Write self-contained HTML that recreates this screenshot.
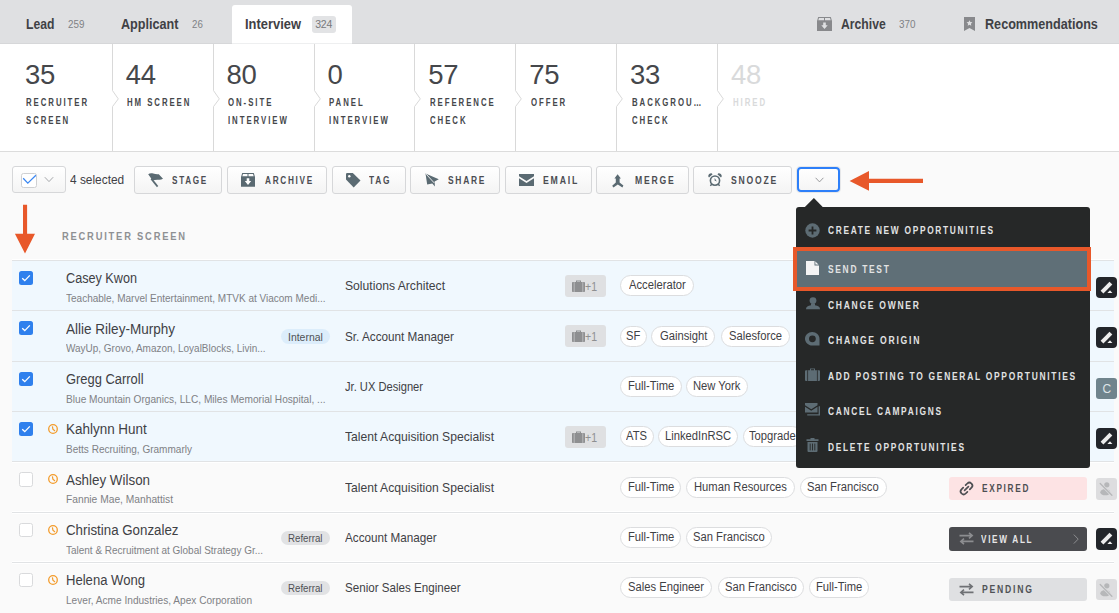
<!DOCTYPE html><html><head><meta charset="utf-8"><style>
*{margin:0;padding:0;box-sizing:border-box}
html,body{width:1119px;height:613px;overflow:hidden;background:#fafafa;font-family:"Liberation Sans",sans-serif}
.t{position:absolute;white-space:nowrap;transform-origin:0 0}
.r{position:absolute}
svg{position:absolute;overflow:visible}
</style></head><body>
<div class="r" style="left:0px;top:0px;width:1119px;height:44px;background:#dfe0e2;border-bottom:1px solid #d6d7d9"></div>
<div class="r" style="left:232px;top:5px;width:120px;height:38.5px;background:#fff;border-radius:3px 3px 0 0"></div>
<div class="t" style="left:26.2px;top:17.45px;font-size:14.5px;line-height:14.5px;color:#3f4145;font-weight:700;letter-spacing:0px;transform:scaleX(0.84);">Lead</div>
<div class="t" style="left:67.6px;top:19.95px;font-size:10.3px;line-height:10.3px;color:#808285;font-weight:400;letter-spacing:0px;transform:scaleX(0.9544);">259</div>
<div class="t" style="left:121.3px;top:17.45px;font-size:14.5px;line-height:14.5px;color:#3f4145;font-weight:700;letter-spacing:0px;transform:scaleX(0.87);">Applicant</div>
<div class="t" style="left:192.3px;top:19.95px;font-size:10.3px;line-height:10.3px;color:#808285;font-weight:400;letter-spacing:0px;transform:scaleX(0.9428);">26</div>
<div class="t" style="left:245.2px;top:17.25px;font-size:14.5px;line-height:14.5px;color:#3f4145;font-weight:700;letter-spacing:0px;transform:scaleX(0.89);">Interview</div>
<div class="r" style="left:232px;top:43px;width:120px;height:1px;background:#eeeff0"></div>
<div class="r" style="left:312px;top:16px;width:24px;height:17px;background:#e2e3e5;border-radius:3px"></div>
<div class="t" style="left:315.2px;top:19.35px;font-size:10.5px;line-height:10.5px;color:#77797c;font-weight:400;letter-spacing:-0.2px;">324</div>
<svg style="left:817px;top:17px" width="15" height="14" viewBox="0 0 15 14"><path d="M1.2 0H13.8L15 3.9V14H0V3.9z" fill="#88898c"/><path d="M2 1H7V3.2H1.3zM8 1H13L13.7 3.2H8z" fill="#dfe0e2"/><path d="M6.2 5.4H8.8V8.2H10.7L7.5 12 4.3 8.2H6.2z" fill="#dfe0e2"/></svg>
<div class="t" style="left:840.5px;top:17.05px;font-size:14.5px;line-height:14.5px;color:#3f4145;font-weight:700;letter-spacing:0px;transform:scaleX(0.84);">Archive</div>
<div class="t" style="left:898.8px;top:19.95px;font-size:10.3px;line-height:10.3px;color:#808285;font-weight:400;letter-spacing:0px;transform:scaleX(0.9602);">370</div>
<svg style="left:964px;top:17px" width="11" height="14" viewBox="0 0 11 14"><path d="M0 0h11v14L5.5 11 0 14z" fill="#88898c"/><path d="M5.5 3.2l.9 1.9 2 .2-1.5 1.4.4 2-1.8-1-1.8 1 .4-2L2.6 5.3l2-.2z" fill="#dfe0e2"/></svg>
<div class="t" style="left:985px;top:17.25px;font-size:14.5px;line-height:14.5px;color:#3f4145;font-weight:700;letter-spacing:0px;transform:scaleX(0.87);">Recommendations</div>
<div class="r" style="left:0px;top:44px;width:1119px;height:108px;background:#fff;border-bottom:1px solid #dcdcdc"></div>
<div class="t" style="left:24.9px;top:61.45px;font-size:27.5px;line-height:27.5px;color:#45474b;font-weight:400;letter-spacing:-0.3px;">35</div>
<div class="t" style="left:25.5px;top:98.10px;font-size:10px;line-height:10px;color:#45474b;font-weight:700;letter-spacing:2.5px;transform:scaleX(0.78);">RECRUITER</div>
<div class="t" style="left:25.5px;top:115.90px;font-size:10px;line-height:10px;color:#45474b;font-weight:700;letter-spacing:2.5px;transform:scaleX(0.78);">SCREEN</div>
<div class="t" style="left:125.75999999999999px;top:61.45px;font-size:27.5px;line-height:27.5px;color:#45474b;font-weight:400;letter-spacing:-0.3px;">44</div>
<div class="t" style="left:127.35999999999999px;top:98.10px;font-size:10px;line-height:10px;color:#45474b;font-weight:700;letter-spacing:2.5px;transform:scaleX(0.78);">HM SCREEN</div>
<div class="t" style="left:226.62px;top:61.45px;font-size:27.5px;line-height:27.5px;color:#45474b;font-weight:400;letter-spacing:-0.3px;">80</div>
<div class="t" style="left:228.22px;top:98.10px;font-size:10px;line-height:10px;color:#45474b;font-weight:700;letter-spacing:2.5px;transform:scaleX(0.78);">ON-SITE</div>
<div class="t" style="left:228.22px;top:115.90px;font-size:10px;line-height:10px;color:#45474b;font-weight:700;letter-spacing:2.5px;transform:scaleX(0.78);">INTERVIEW</div>
<div class="t" style="left:327.47999999999996px;top:61.45px;font-size:27.5px;line-height:27.5px;color:#45474b;font-weight:400;letter-spacing:-0.3px;">0</div>
<div class="t" style="left:329.08px;top:98.10px;font-size:10px;line-height:10px;color:#45474b;font-weight:700;letter-spacing:2.5px;transform:scaleX(0.78);">PANEL</div>
<div class="t" style="left:329.08px;top:115.90px;font-size:10px;line-height:10px;color:#45474b;font-weight:700;letter-spacing:2.5px;transform:scaleX(0.78);">INTERVIEW</div>
<div class="t" style="left:428.34px;top:61.45px;font-size:27.5px;line-height:27.5px;color:#45474b;font-weight:400;letter-spacing:-0.3px;">57</div>
<div class="t" style="left:429.94px;top:98.10px;font-size:10px;line-height:10px;color:#45474b;font-weight:700;letter-spacing:2.5px;transform:scaleX(0.78);">REFERENCE</div>
<div class="t" style="left:429.94px;top:115.90px;font-size:10px;line-height:10px;color:#45474b;font-weight:700;letter-spacing:2.5px;transform:scaleX(0.78);">CHECK</div>
<div class="t" style="left:529.2px;top:61.45px;font-size:27.5px;line-height:27.5px;color:#45474b;font-weight:400;letter-spacing:-0.3px;">75</div>
<div class="t" style="left:530.8000000000001px;top:98.10px;font-size:10px;line-height:10px;color:#45474b;font-weight:700;letter-spacing:2.5px;transform:scaleX(0.78);">OFFER</div>
<div class="t" style="left:630.06px;top:61.45px;font-size:27.5px;line-height:27.5px;color:#45474b;font-weight:400;letter-spacing:-0.3px;">33</div>
<div class="t" style="left:631.66px;top:98.10px;font-size:10px;line-height:10px;color:#45474b;font-weight:700;letter-spacing:2.5px;transform:scaleX(0.78);">BACKGROU…</div>
<div class="t" style="left:631.66px;top:115.90px;font-size:10px;line-height:10px;color:#45474b;font-weight:700;letter-spacing:2.5px;transform:scaleX(0.78);">CHECK</div>
<div class="t" style="left:730.92px;top:61.45px;font-size:27.5px;line-height:27.5px;color:#d9dadb;font-weight:400;letter-spacing:-0.3px;">48</div>
<div class="t" style="left:732.52px;top:98.10px;font-size:10px;line-height:10px;color:#d9dadb;font-weight:700;letter-spacing:2.5px;transform:scaleX(0.78);">HIRED</div>
<svg style="left:112.30px;top:43px" width="8" height="108" viewBox="0 0 8 108"><path d="M0.5 1V47.6L6.3 55.9 0.5 63.6V108" fill="none" stroke="#d9d9d9" stroke-width="1"/></svg>
<svg style="left:213.00px;top:43px" width="8" height="108" viewBox="0 0 8 108"><path d="M0.5 1V47.6L6.3 55.9 0.5 63.6V108" fill="none" stroke="#d9d9d9" stroke-width="1"/></svg>
<svg style="left:313.70px;top:43px" width="8" height="108" viewBox="0 0 8 108"><path d="M0.5 1V47.6L6.3 55.9 0.5 63.6V108" fill="none" stroke="#d9d9d9" stroke-width="1"/></svg>
<svg style="left:414.40px;top:43px" width="8" height="108" viewBox="0 0 8 108"><path d="M0.5 1V47.6L6.3 55.9 0.5 63.6V108" fill="none" stroke="#d9d9d9" stroke-width="1"/></svg>
<svg style="left:515.10px;top:43px" width="8" height="108" viewBox="0 0 8 108"><path d="M0.5 1V47.6L6.3 55.9 0.5 63.6V108" fill="none" stroke="#d9d9d9" stroke-width="1"/></svg>
<svg style="left:615.80px;top:43px" width="8" height="108" viewBox="0 0 8 108"><path d="M0.5 1V47.6L6.3 55.9 0.5 63.6V108" fill="none" stroke="#d9d9d9" stroke-width="1"/></svg>
<svg style="left:716.50px;top:43px" width="8" height="108" viewBox="0 0 8 108"><path d="M0.5 1V47.6L6.3 55.9 0.5 63.6V108" fill="none" stroke="#d9d9d9" stroke-width="1"/></svg>
<div class="r" style="left:12px;top:166px;width:54px;height:27px;background:linear-gradient(#ffffff,#f4f4f4);border:1px solid #d6d7d9;border-radius:3px"></div>
<div class="r" style="left:21px;top:173px;width:16px;height:15px;background:#fff;border:1px solid #cfd0d2;border-radius:2.5px"></div>
<svg style="left:21px;top:173px" width="16" height="15" viewBox="0 0 16 15"><path d="M2.2 5.3L6.8 10.1 14.9 2.2" fill="none" stroke="#3a87f2" stroke-width="1.25"/></svg>
<svg style="left:43.5px;top:176.3px" width="10" height="7" viewBox="0 0 10 7"><path d="M0.8 1.2L5 5.6 9.2 1.2" fill="none" stroke="#a5a7aa" stroke-width="1"/></svg>
<div class="t" style="left:70.3px;top:173.45px;font-size:13.5px;line-height:13.5px;color:#3f4145;font-weight:400;letter-spacing:0px;transform:scaleX(0.8808);">4 selected</div>
<div class="r" style="left:134px;top:166px;width:88px;height:28px;background:linear-gradient(#ffffff,#f4f4f4);border:1px solid #d6d7d9;border-radius:3px"></div>
<svg style="left:148px;top:173.0px" width="15" height="14" viewBox="0 0 15 14"><path d="M0.2 1.3C1.5 0.2 3.5 0 5.2 0.6 7 1.2 9 1.4 10.8 1.2L15 5.8C13.5 6.8 12 7 10.6 6.8 8.5 6.5 6.4 7 4.6 7.4z" fill="#5a6a72"/><path d="M3.2 5.6L9.6 13.6" stroke="#5a6a72" stroke-width="1.7"/></svg>
<div class="t" style="left:172.2px;top:175.70px;font-size:10.2px;line-height:10.2px;color:#4b4d52;font-weight:700;letter-spacing:2.1px;transform:scaleX(0.8018);">STAGE</div>
<div class="r" style="left:227px;top:166px;width:100px;height:28px;background:linear-gradient(#ffffff,#f4f4f4);border:1px solid #d6d7d9;border-radius:3px"></div>
<svg style="left:241px;top:173.0px" width="15" height="14" viewBox="0 0 15 14"><path d="M1.2 0H12.8L14 3.9V13.8H0V3.9z" fill="#5a6a72"/><path d="M2 1H6.5V3.2H1.3zM7.5 1H12L12.7 3.2H7.5z" fill="#fcfcfc"/><path d="M5.7 5.3H8.3V8.1H10.2L7 11.9 3.8 8.1H5.7z" fill="#fff"/></svg>
<div class="t" style="left:264.8px;top:175.70px;font-size:10.2px;line-height:10.2px;color:#4b4d52;font-weight:700;letter-spacing:2.1px;transform:scaleX(0.8067);">ARCHIVE</div>
<div class="r" style="left:332px;top:166px;width:74px;height:28px;background:linear-gradient(#ffffff,#f4f4f4);border:1px solid #d6d7d9;border-radius:3px"></div>
<svg style="left:345.5px;top:172.5px" width="15" height="15" viewBox="0 0 15 15"><path d="M0 0.8L0.6 0h6.2L14.5 7.6 7.7 14.4 0 6.6z" fill="#5a6a72"/><circle cx="3.3" cy="3.3" r="1.2" fill="#fff"/></svg>
<div class="t" style="left:369.3px;top:175.70px;font-size:10.2px;line-height:10.2px;color:#4b4d52;font-weight:700;letter-spacing:2.1px;transform:scaleX(0.8169);">TAG</div>
<div class="r" style="left:410px;top:166px;width:90px;height:28px;background:linear-gradient(#ffffff,#f4f4f4);border:1px solid #d6d7d9;border-radius:3px"></div>
<svg style="left:425px;top:173.0px" width="14" height="14" viewBox="0 0 14 14"><path d="M0.5 0.5L13.8 6.3 9.6 8.4 9.9 13.4 7.3 10.6 2.2 11.4z" fill="#5a6a72"/><path d="M1.2 1.2L9.2 9.9" stroke="#fafafa" stroke-width="0.9"/></svg>
<div class="t" style="left:448.4px;top:175.70px;font-size:10.2px;line-height:10.2px;color:#4b4d52;font-weight:700;letter-spacing:2.1px;transform:scaleX(0.8275);">SHARE</div>
<div class="r" style="left:505px;top:166px;width:87px;height:28px;background:linear-gradient(#ffffff,#f4f4f4);border:1px solid #d6d7d9;border-radius:3px"></div>
<svg style="left:518.8px;top:174.0px" width="15" height="12" viewBox="0 0 15 12"><path d="M0 0h15v2.2L7.5 7 0 2.2z M0 4.2L7.5 9 15 4.2V12H0z" fill="#5a6a72"/></svg>
<div class="t" style="left:542.9px;top:175.70px;font-size:10.2px;line-height:10.2px;color:#4b4d52;font-weight:700;letter-spacing:2.1px;transform:scaleX(0.8547);">EMAIL</div>
<div class="r" style="left:596px;top:166px;width:93px;height:28px;background:linear-gradient(#ffffff,#f4f4f4);border:1px solid #d6d7d9;border-radius:3px"></div>
<svg style="left:612px;top:173.5px" width="12" height="13" viewBox="0 0 12 13"><path d="M5.6 0.3L8.9 4.6H7.6V8.6L11.4 11.6 10.4 13.6 5.8 10.6 1.4 13.6 0.2 11.8 3.8 8.6V4.6H2.4z" fill="#5a6a72"/></svg>
<div class="t" style="left:634.9px;top:175.70px;font-size:10.2px;line-height:10.2px;color:#4b4d52;font-weight:700;letter-spacing:2.1px;transform:scaleX(0.8471);">MERGE</div>
<div class="r" style="left:693px;top:166px;width:99px;height:28px;background:linear-gradient(#ffffff,#f4f4f4);border:1px solid #d6d7d9;border-radius:3px"></div>
<svg style="left:707.8px;top:173.0px" width="14" height="14" viewBox="0 0 14 14"><circle cx="7" cy="7.6" r="4.6" fill="none" stroke="#5a6a72" stroke-width="1.6"/><path d="M0.2 3.2C0.4 1.2 2 0.1 3.8 0.4L4.6 1.2 1 4.4z M13.8 3.2C13.6 1.2 12 0.1 10.2 0.4L9.4 1.2 13 4.4z M3.2 10.6L1.8 12.6 3 13.2 4.4 11.6z M10.8 10.6L12.2 12.6 11 13.2 9.6 11.6z M6.7 5L8.8 8.4 6.6 7.6z" fill="#5a6a72"/></svg>
<div class="t" style="left:731.4px;top:175.70px;font-size:10.2px;line-height:10.2px;color:#4b4d52;font-weight:700;letter-spacing:2.1px;transform:scaleX(0.8456);">SNOOZE</div>
<div class="r" style="left:796px;top:166px;width:45px;height:27px;background:linear-gradient(#ffffff,#f4f4f4);border:1px solid #e6e7e9;border-radius:4px"></div>
<div class="r" style="left:797px;top:167px;width:43px;height:25px;border:2.2px solid #2d7ff9;border-radius:4px"></div>
<svg style="left:815px;top:177px" width="9" height="6" viewBox="0 0 9 6"><path d="M0.6 0.8L4.5 4.9 8.4 0.8" fill="none" stroke="#8d8f92" stroke-width="0.9"/></svg>
<svg style="left:849px;top:170px" width="76" height="22" viewBox="849 170 76 22"><path d="M849.6 181L869 171.1V178.8H923V183.1H869V190.8z" fill="#e8582a"/></svg>
<svg style="left:14px;top:204px" width="22" height="50" viewBox="14 204 22 50"><path d="M23 204.8H27.1V233.7H35L25 253.5 14.9 233.7H23z" fill="#e8582a"/></svg>
<div class="t" style="left:61.6px;top:230.85px;font-size:11.5px;line-height:11.5px;color:#8e9093;font-weight:700;letter-spacing:2.2px;transform:scaleX(0.8134);">RECRUITER SCREEN</div>
<div class="r" style="left:12px;top:260px;width:1102px;height:50px;background:#f0f8fe;border-top:1px solid #e1e3e5"></div>
<div class="r" style="left:12px;top:259px;width:1102px;height:1px;background:#ffffff"></div>
<div class="r" style="left:19px;top:270.90000000000003px;width:14px;height:14px;background:#2f80ed;border-radius:2.5px"></div>
<svg style="left:19px;top:270.9px" width="14" height="14" viewBox="0 0 14 14"><path d="M3.2 7.2L5.8 9.6 10.8 4.4" fill="none" stroke="#fff" stroke-width="1.3"/></svg>
<div class="t" style="left:65.9px;top:271.40px;font-size:14px;line-height:14px;color:#3f4145;font-weight:400;letter-spacing:0px;transform:scaleX(0.9034);">Casey Kwon</div>
<div class="t" style="left:65.9px;top:293.00px;font-size:11px;line-height:11px;color:#7f8185;font-weight:400;letter-spacing:0px;transform:scaleX(0.9096);">Teachable, Marvel Entertainment, MTVK at Viacom Medi...</div>
<div class="t" style="left:344.9px;top:279.30px;font-size:13px;line-height:13px;color:#3f4145;font-weight:400;letter-spacing:0px;transform:scaleX(0.9351);">Solutions Architect</div>
<div class="r" style="left:565.2px;top:275.1px;width:40.6px;height:21.8px;background:#dfe0e2;border-radius:3px"></div>
<svg style="left:572px;top:280.1px" width="13" height="12" viewBox="0 0 13 12"><path d="M4 0.5h5v1.6h3.2a0.8 0.8 0 0 1 .8.8V11.2a.8.8 0 0 1-.8.8H.8A.8.8 0 0 1 0 11.2V2.9a.8.8 0 0 1 .8-.8H4z M5 1.4v.7h3v-.7z" fill="#8e8f91"/><path d="M2.2 2.1v9.9M10.8 2.1v9.9" stroke="#c4c5c7" stroke-width="0.8"/></svg>
<div class="t" style="left:585.2px;top:280.70px;font-size:12px;line-height:12px;color:#8e8f91;font-weight:400;letter-spacing:0px;transform:scaleX(0.8771);">+1</div>
<div class="r" style="left:620.4px;top:275.40000000000003px;width:73.20000000000005px;height:21px;background:#fff;border:1px solid #dcdddf;border-radius:11px"></div>
<div class="t" style="left:628.6283015625px;top:279.45px;font-size:12.5px;line-height:12.5px;color:#3f4145;font-weight:400;letter-spacing:0px;transform:scaleX(0.8976);">Accelerator</div>
<div class="r" style="left:1096px;top:276.70000000000005px;width:21px;height:21.3px;background:#22252a;border-radius:4px"></div>
<svg style="left:1096px;top:276.7px" width="21" height="21" viewBox="0 0 21 21"><path d="M13.5 4.7L16.3 7.5 7.4 16.6 4.6 13.8z" fill="#ececec"/><path d="M11.4 16.1L14 13.3 16.4 16.1z" fill="#f2f2f2"/></svg>
<div class="r" style="left:12px;top:310px;width:1102px;height:51px;background:#f0f8fe;border-top:1px solid #e1e3e5"></div>
<div class="r" style="left:19px;top:321.233px;width:14px;height:14px;background:#2f80ed;border-radius:2.5px"></div>
<svg style="left:19px;top:321.2px" width="14" height="14" viewBox="0 0 14 14"><path d="M3.2 7.2L5.8 9.6 10.8 4.4" fill="none" stroke="#fff" stroke-width="1.3"/></svg>
<div class="t" style="left:65.9px;top:321.73px;font-size:14px;line-height:14px;color:#3f4145;font-weight:400;letter-spacing:0px;transform:scaleX(0.9663);">Allie Riley-Murphy</div>
<div class="t" style="left:65.9px;top:343.33px;font-size:11px;line-height:11px;color:#7f8185;font-weight:400;letter-spacing:0px;transform:scaleX(0.9057);">WayUp, Grovo, Amazon, LoyalBlocks, Livin...</div>
<div class="r" style="left:281.2px;top:329.233px;width:48.6px;height:14.4px;background:#dcedfb;border-radius:8px"></div>
<div class="t" style="left:288.1px;top:331.73px;font-size:11px;line-height:11px;color:#4f5155;font-weight:400;letter-spacing:0px;transform:scaleX(0.9486);">Internal</div>
<div class="t" style="left:344.9px;top:329.63px;font-size:13px;line-height:13px;color:#3f4145;font-weight:400;letter-spacing:0px;transform:scaleX(0.9024);">Sr. Account Manager</div>
<div class="r" style="left:565.2px;top:325.433px;width:40.6px;height:21.8px;background:#dfe0e2;border-radius:3px"></div>
<svg style="left:572px;top:330.4px" width="13" height="12" viewBox="0 0 13 12"><path d="M4 0.5h5v1.6h3.2a0.8 0.8 0 0 1 .8.8V11.2a.8.8 0 0 1-.8.8H.8A.8.8 0 0 1 0 11.2V2.9a.8.8 0 0 1 .8-.8H4z M5 1.4v.7h3v-.7z" fill="#8e8f91"/><path d="M2.2 2.1v9.9M10.8 2.1v9.9" stroke="#c4c5c7" stroke-width="0.8"/></svg>
<div class="t" style="left:585.2px;top:331.03px;font-size:12px;line-height:12px;color:#8e8f91;font-weight:400;letter-spacing:0px;transform:scaleX(0.8771);">+1</div>
<div class="r" style="left:620.1px;top:325.733px;width:26.5px;height:21px;background:#fff;border:1px solid #dcdddf;border-radius:11px"></div>
<div class="t" style="left:626.181471875px;top:329.78px;font-size:12.5px;line-height:12.5px;color:#3f4145;font-weight:400;letter-spacing:0px;transform:scaleX(0.8976);">SF</div>
<div class="r" style="left:651.3px;top:325.733px;width:64.10000000000002px;height:21px;background:#fff;border:1px solid #dcdddf;border-radius:11px"></div>
<div class="t" style="left:659.65125625px;top:329.78px;font-size:12.5px;line-height:12.5px;color:#3f4145;font-weight:400;letter-spacing:0px;transform:scaleX(0.8976);">Gainsight</div>
<div class="r" style="left:720.6px;top:325.733px;width:69.0px;height:21px;background:#fff;border:1px solid #dcdddf;border-radius:11px"></div>
<div class="t" style="left:728.59625625px;top:329.78px;font-size:12.5px;line-height:12.5px;color:#3f4145;font-weight:400;letter-spacing:0px;transform:scaleX(0.8976);">Salesforce</div>
<div class="r" style="left:1096px;top:327.033px;width:21px;height:21.3px;background:#22252a;border-radius:4px"></div>
<svg style="left:1096px;top:327.0px" width="21" height="21" viewBox="0 0 21 21"><path d="M13.5 4.7L16.3 7.5 7.4 16.6 4.6 13.8z" fill="#ececec"/><path d="M11.4 16.1L14 13.3 16.4 16.1z" fill="#f2f2f2"/></svg>
<div class="r" style="left:12px;top:361px;width:1102px;height:50px;background:#f0f8fe;border-top:1px solid #e1e3e5"></div>
<div class="r" style="left:19px;top:371.56600000000003px;width:14px;height:14px;background:#2f80ed;border-radius:2.5px"></div>
<svg style="left:19px;top:371.6px" width="14" height="14" viewBox="0 0 14 14"><path d="M3.2 7.2L5.8 9.6 10.8 4.4" fill="none" stroke="#fff" stroke-width="1.3"/></svg>
<div class="t" style="left:65.9px;top:372.07px;font-size:14px;line-height:14px;color:#3f4145;font-weight:400;letter-spacing:0px;transform:scaleX(0.9224);">Gregg Carroll</div>
<div class="t" style="left:65.9px;top:393.67px;font-size:11px;line-height:11px;color:#7f8185;font-weight:400;letter-spacing:0px;transform:scaleX(0.9208);">Blue Mountain Organics, LLC, Miles Memorial Hospital, ...</div>
<div class="t" style="left:344.9px;top:379.97px;font-size:13px;line-height:13px;color:#3f4145;font-weight:400;letter-spacing:0px;transform:scaleX(0.8569);">Jr. UX Designer</div>
<div class="r" style="left:620.1px;top:376.06600000000003px;width:61.5px;height:21px;background:#fff;border:1px solid #dcdddf;border-radius:11px"></div>
<div class="t" style="left:627.6850828125px;top:380.12px;font-size:12.5px;line-height:12.5px;color:#3f4145;font-weight:400;letter-spacing:0px;transform:scaleX(0.8976);">Full-Time</div>
<div class="r" style="left:685.6px;top:376.06600000000003px;width:62.89999999999998px;height:21px;background:#fff;border:1px solid #dcdddf;border-radius:11px"></div>
<div class="t" style="left:693.3503796875px;top:380.12px;font-size:12.5px;line-height:12.5px;color:#3f4145;font-weight:400;letter-spacing:0px;transform:scaleX(0.8976);">New York</div>
<div class="r" style="left:1096px;top:378.36600000000004px;width:21px;height:20.8px;background:#70848d;border-radius:3px"></div>
<div class="t" style="left:1102.6px;top:383.27px;font-size:12px;line-height:12px;color:#dfe5e8;font-weight:400;letter-spacing:0px;font-family:"Liberation Serif",serif;">C</div>
<div class="r" style="left:12px;top:411px;width:1102px;height:50px;background:#f0f8fe;border-top:1px solid #e1e3e5"></div>
<div class="r" style="left:19px;top:421.89900000000006px;width:14px;height:14px;background:#2f80ed;border-radius:2.5px"></div>
<svg style="left:19px;top:421.9px" width="14" height="14" viewBox="0 0 14 14"><path d="M3.2 7.2L5.8 9.6 10.8 4.4" fill="none" stroke="#fff" stroke-width="1.3"/></svg>
<svg style="left:47.8px;top:423.8px" width="10" height="10" viewBox="0 0 10 10"><circle cx="5" cy="5" r="4.3" fill="none" stroke="#f39c2c" stroke-width="1.3"/><path d="M4.4 2.4L4.9 5.2 7 7" fill="none" stroke="#f39c2c" stroke-width="1.2"/></svg>
<div class="t" style="left:65.9px;top:422.40px;font-size:14px;line-height:14px;color:#3f4145;font-weight:400;letter-spacing:0px;transform:scaleX(0.9613);">Kahlynn Hunt</div>
<div class="t" style="left:65.9px;top:444.00px;font-size:11px;line-height:11px;color:#7f8185;font-weight:400;letter-spacing:0px;transform:scaleX(0.9121);">Betts Recruiting, Grammarly</div>
<div class="t" style="left:344.9px;top:430.30px;font-size:13px;line-height:13px;color:#3f4145;font-weight:400;letter-spacing:0px;transform:scaleX(0.933);">Talent Acquisition Specialist</div>
<div class="r" style="left:565.2px;top:426.09900000000005px;width:40.6px;height:21.8px;background:#dfe0e2;border-radius:3px"></div>
<svg style="left:572px;top:431.1px" width="13" height="12" viewBox="0 0 13 12"><path d="M4 0.5h5v1.6h3.2a0.8 0.8 0 0 1 .8.8V11.2a.8.8 0 0 1-.8.8H.8A.8.8 0 0 1 0 11.2V2.9a.8.8 0 0 1 .8-.8H4z M5 1.4v.7h3v-.7z" fill="#8e8f91"/><path d="M2.2 2.1v9.9M10.8 2.1v9.9" stroke="#c4c5c7" stroke-width="0.8"/></svg>
<div class="t" style="left:585.2px;top:431.70px;font-size:12px;line-height:12px;color:#8e8f91;font-weight:400;letter-spacing:0px;transform:scaleX(0.8771);">+1</div>
<div class="r" style="left:620px;top:426.39900000000006px;width:33.700000000000045px;height:21px;background:#fff;border:1px solid #dcdddf;border-radius:11px"></div>
<div class="t" style="left:626.35579375px;top:430.45px;font-size:12.5px;line-height:12.5px;color:#3f4145;font-weight:400;letter-spacing:0px;transform:scaleX(0.8976);">ATS</div>
<div class="r" style="left:658.4px;top:426.39900000000006px;width:79.89999999999998px;height:21px;background:#fff;border:1px solid #dcdddf;border-radius:11px"></div>
<div class="t" style="left:665.2965812499999px;top:430.45px;font-size:12.5px;line-height:12.5px;color:#3f4145;font-weight:400;letter-spacing:0px;transform:scaleX(0.8976);">LinkedInRSC</div>
<div class="r" style="left:742.6px;top:426.39900000000006px;width:60.39999999999998px;height:21px;background:#fff;border:1px solid #dcdddf;border-radius:11px"></div>
<div class="t" style="left:749.4089296875px;top:430.45px;font-size:12.5px;line-height:12.5px;color:#3f4145;font-weight:400;letter-spacing:0px;transform:scaleX(0.8976);">Topgrade</div>
<div class="r" style="left:1096px;top:427.69900000000007px;width:21px;height:21.3px;background:#22252a;border-radius:4px"></div>
<svg style="left:1096px;top:427.7px" width="21" height="21" viewBox="0 0 21 21"><path d="M13.5 4.7L16.3 7.5 7.4 16.6 4.6 13.8z" fill="#ececec"/><path d="M11.4 16.1L14 13.3 16.4 16.1z" fill="#f2f2f2"/></svg>
<div class="r" style="left:12px;top:461px;width:1102px;height:51px;background:#fafafa;border-top:1px solid #e1e3e5"></div>
<div class="r" style="left:12px;top:462px;width:1102px;height:1px;background:#ffffff"></div>
<div class="r" style="left:19px;top:472.232px;width:14px;height:14.5px;background:#fff;border:1px solid #d9dadc;border-radius:2.5px"></div>
<svg style="left:47.8px;top:474.1px" width="10" height="10" viewBox="0 0 10 10"><circle cx="5" cy="5" r="4.3" fill="none" stroke="#f39c2c" stroke-width="1.3"/><path d="M4.4 2.4L4.9 5.2 7 7" fill="none" stroke="#f39c2c" stroke-width="1.2"/></svg>
<div class="t" style="left:65.9px;top:472.73px;font-size:14px;line-height:14px;color:#3f4145;font-weight:400;letter-spacing:0px;transform:scaleX(0.9555);">Ashley Wilson</div>
<div class="t" style="left:65.9px;top:494.33px;font-size:11px;line-height:11px;color:#7f8185;font-weight:400;letter-spacing:0px;transform:scaleX(0.9309);">Fannie Mae, Manhattist</div>
<div class="t" style="left:344.9px;top:480.63px;font-size:13px;line-height:13px;color:#3f4145;font-weight:400;letter-spacing:0px;transform:scaleX(0.933);">Talent Acquisition Specialist</div>
<div class="r" style="left:620.4px;top:476.732px;width:60.80000000000007px;height:21px;background:#fff;border:1px solid #dcdddf;border-radius:11px"></div>
<div class="t" style="left:627.6350828125px;top:480.78px;font-size:12.5px;line-height:12.5px;color:#3f4145;font-weight:400;letter-spacing:0px;transform:scaleX(0.8976);">Full-Time</div>
<div class="r" style="left:685.6px;top:476.732px;width:109.60000000000002px;height:21px;background:#fff;border:1px solid #dcdddf;border-radius:11px"></div>
<div class="t" style="left:693.9448171875001px;top:480.78px;font-size:12.5px;line-height:12.5px;color:#3f4145;font-weight:400;letter-spacing:0px;transform:scaleX(0.8976);">Human Resources</div>
<div class="r" style="left:799.7px;top:476.732px;width:87.0px;height:21px;background:#fff;border:1px solid #dcdddf;border-radius:11px"></div>
<div class="t" style="left:807.3450875000001px;top:480.78px;font-size:12.5px;line-height:12.5px;color:#3f4145;font-weight:400;letter-spacing:0px;transform:scaleX(0.8976);">San Francisco</div>
<div class="r" style="left:949.3px;top:476.932px;width:137.6px;height:23px;background:#fde3e4;border-radius:3px"></div>
<svg style="left:959px;top:480.7px" width="15" height="15" viewBox="0 0 15 15"><path d="M5.6 9.4L9.4 5.6 M6.6 4.2L8.3 2.5a2.9 2.9 0 0 1 4.1 0l.1.1a2.9 2.9 0 0 1 0 4.1L10.8 8.4 M8.4 10.8L6.7 12.5a2.9 2.9 0 0 1-4.1 0l-.1-.1a2.9 2.9 0 0 1 0-4.1L4.2 6.6" fill="none" stroke="#4d4f53" stroke-width="1.7" stroke-linecap="round"/></svg>
<div class="t" style="left:981.9px;top:483.83px;font-size:10.2px;line-height:10.2px;color:#4d4f53;font-weight:700;letter-spacing:2.1px;transform:scaleX(0.8086);">EXPIRED</div>
<div class="r" style="left:1096px;top:478.03200000000004px;width:21px;height:21.5px;background:#dddddf;border-radius:3px"></div>
<svg style="left:1096px;top:478.0px" width="21" height="21" viewBox="0 0 21 21"><circle cx="10.8" cy="6.8" r="2.6" fill="#b6b7b9"/><ellipse cx="9.3" cy="14.2" rx="5" ry="3.1" fill="#b6b7b9"/><path d="M4.2 5.5L15.9 17.3" stroke="#dddddf" stroke-width="2.6"/><path d="M4.2 5.5L15.9 17.3" stroke="#b6b7b9" stroke-width="1.3" stroke-linecap="round"/></svg>
<div class="r" style="left:12px;top:512px;width:1102px;height:50px;background:#fafafa;border-top:1px solid #e1e3e5"></div>
<div class="r" style="left:12px;top:513px;width:1102px;height:1px;background:#ffffff"></div>
<div class="r" style="left:12px;top:511px;width:1102px;height:1px;background:#ffffff"></div>
<div class="r" style="left:19px;top:522.5649999999999px;width:14px;height:14.5px;background:#fff;border:1px solid #d9dadc;border-radius:2.5px"></div>
<svg style="left:47.8px;top:524.5px" width="10" height="10" viewBox="0 0 10 10"><circle cx="5" cy="5" r="4.3" fill="none" stroke="#f39c2c" stroke-width="1.3"/><path d="M4.4 2.4L4.9 5.2 7 7" fill="none" stroke="#f39c2c" stroke-width="1.2"/></svg>
<div class="t" style="left:65.9px;top:523.06px;font-size:14px;line-height:14px;color:#3f4145;font-weight:400;letter-spacing:0px;transform:scaleX(0.9512);">Christina Gonzalez</div>
<div class="t" style="left:65.9px;top:544.66px;font-size:11px;line-height:11px;color:#7f8185;font-weight:400;letter-spacing:0px;transform:scaleX(0.9077);">Talent &amp; Recruitment at Global Strategy Gr...</div>
<div class="r" style="left:281.2px;top:530.5649999999999px;width:48.6px;height:14.4px;background:#e1e2e4;border-radius:8px"></div>
<div class="t" style="left:288.25px;top:533.06px;font-size:11px;line-height:11px;color:#4f5155;font-weight:400;letter-spacing:0px;transform:scaleX(0.8819);">Referral</div>
<div class="t" style="left:344.9px;top:530.96px;font-size:13px;line-height:13px;color:#3f4145;font-weight:400;letter-spacing:0px;transform:scaleX(0.899);">Account Manager</div>
<div class="r" style="left:620.4px;top:527.0649999999999px;width:60.80000000000007px;height:21px;background:#fff;border:1px solid #dcdddf;border-radius:11px"></div>
<div class="t" style="left:627.6350828125px;top:531.11px;font-size:12.5px;line-height:12.5px;color:#3f4145;font-weight:400;letter-spacing:0px;transform:scaleX(0.8976);">Full-Time</div>
<div class="r" style="left:685.6px;top:527.0649999999999px;width:86.79999999999995px;height:21px;background:#fff;border:1px solid #dcdddf;border-radius:11px"></div>
<div class="t" style="left:693.1450875px;top:531.11px;font-size:12.5px;line-height:12.5px;color:#3f4145;font-weight:400;letter-spacing:0px;transform:scaleX(0.8976);">San Francisco</div>
<div class="r" style="left:949.3px;top:526.865px;width:137.6px;height:24.2px;background:#4a4b4f;border-radius:3px"></div>
<svg style="left:958.5px;top:532.3px" width="15" height="13" viewBox="0 0 15 13"><path d="M0.5 3.6H13 M10 0.8L13.2 3.6 10 6.4 M14.5 9.4H2 M5 6.6L1.8 9.4 5 12.2" fill="none" stroke="#8c8d90" stroke-width="1.6"/></svg>
<div class="t" style="left:980.7px;top:534.96px;font-size:10.2px;line-height:10.2px;color:#e6e6e7;font-weight:700;letter-spacing:2.1px;transform:scaleX(0.8025);">VIEW ALL</div>
<svg style="left:1072.5px;top:533.6px" width="7" height="11" viewBox="0 0 7 11"><path d="M0.8 0.6L5.2 5.1 0.8 9.6" fill="none" stroke="#8c8d90" stroke-width="1"/></svg>
<div class="r" style="left:1096px;top:528.365px;width:21px;height:21.3px;background:#22252a;border-radius:4px"></div>
<svg style="left:1096px;top:528.4px" width="21" height="21" viewBox="0 0 21 21"><path d="M13.5 4.7L16.3 7.5 7.4 16.6 4.6 13.8z" fill="#ececec"/><path d="M11.4 16.1L14 13.3 16.4 16.1z" fill="#f2f2f2"/></svg>
<div class="r" style="left:12px;top:562px;width:1102px;height:50px;background:#fafafa;border-top:1px solid #e1e3e5"></div>
<div class="r" style="left:12px;top:563px;width:1102px;height:1px;background:#ffffff"></div>
<div class="r" style="left:12px;top:561px;width:1102px;height:1px;background:#ffffff"></div>
<div class="r" style="left:19px;top:572.898px;width:14px;height:14.5px;background:#fff;border:1px solid #d9dadc;border-radius:2.5px"></div>
<svg style="left:47.8px;top:574.8px" width="10" height="10" viewBox="0 0 10 10"><circle cx="5" cy="5" r="4.3" fill="none" stroke="#f39c2c" stroke-width="1.3"/><path d="M4.4 2.4L4.9 5.2 7 7" fill="none" stroke="#f39c2c" stroke-width="1.2"/></svg>
<div class="t" style="left:65.9px;top:573.40px;font-size:14px;line-height:14px;color:#3f4145;font-weight:400;letter-spacing:0px;transform:scaleX(0.9342);">Helena Wong</div>
<div class="t" style="left:65.9px;top:595.00px;font-size:11px;line-height:11px;color:#7f8185;font-weight:400;letter-spacing:0px;transform:scaleX(0.9191);">Lever, Acme Industries, Apex Corporation</div>
<div class="r" style="left:281.2px;top:580.898px;width:48.6px;height:14.4px;background:#e1e2e4;border-radius:8px"></div>
<div class="t" style="left:288.25px;top:583.40px;font-size:11px;line-height:11px;color:#4f5155;font-weight:400;letter-spacing:0px;transform:scaleX(0.8819);">Referral</div>
<div class="t" style="left:344.9px;top:581.30px;font-size:13px;line-height:13px;color:#3f4145;font-weight:400;letter-spacing:0px;transform:scaleX(0.8929);">Senior Sales Engineer</div>
<div class="r" style="left:620.4px;top:577.398px;width:91.89999999999998px;height:21px;background:#fff;border:1px solid #dcdddf;border-radius:11px"></div>
<div class="t" style="left:628.30368125px;top:581.45px;font-size:12.5px;line-height:12.5px;color:#3f4145;font-weight:400;letter-spacing:0px;transform:scaleX(0.8976);">Sales Engineer</div>
<div class="r" style="left:717.5px;top:577.398px;width:86.79999999999995px;height:21px;background:#fff;border:1px solid #dcdddf;border-radius:11px"></div>
<div class="t" style="left:725.0450875px;top:581.45px;font-size:12.5px;line-height:12.5px;color:#3f4145;font-weight:400;letter-spacing:0px;transform:scaleX(0.8976);">San Francisco</div>
<div class="r" style="left:808.7px;top:577.398px;width:60.299999999999955px;height:21px;background:#fff;border:1px solid #dcdddf;border-radius:11px"></div>
<div class="t" style="left:815.6850828125px;top:581.45px;font-size:12.5px;line-height:12.5px;color:#3f4145;font-weight:400;letter-spacing:0px;transform:scaleX(0.8976);">Full-Time</div>
<div class="r" style="left:949.3px;top:577.6980000000001px;width:137.6px;height:23.4px;background:#dfe0e2;border-radius:3px"></div>
<svg style="left:958.5px;top:582.8px" width="15" height="13" viewBox="0 0 15 13"><path d="M0.5 3.6H13 M10 0.8L13.2 3.6 10 6.4 M14.5 9.4H2 M5 6.6L1.8 9.4 5 12.2" fill="none" stroke="#6f7175" stroke-width="1.6"/></svg>
<div class="t" style="left:982px;top:584.60px;font-size:10.2px;line-height:10.2px;color:#505256;font-weight:700;letter-spacing:2.1px;transform:scaleX(0.8464);">PENDING</div>
<div class="r" style="left:1096px;top:578.6980000000001px;width:21px;height:21.5px;background:#dddddf;border-radius:3px"></div>
<svg style="left:1096px;top:578.7px" width="21" height="21" viewBox="0 0 21 21"><circle cx="10.8" cy="6.8" r="2.6" fill="#b6b7b9"/><ellipse cx="9.3" cy="14.2" rx="5" ry="3.1" fill="#b6b7b9"/><path d="M4.2 5.5L15.9 17.3" stroke="#dddddf" stroke-width="2.6"/><path d="M4.2 5.5L15.9 17.3" stroke="#b6b7b9" stroke-width="1.3" stroke-linecap="round"/></svg>
<div class="r" style="left:796px;top:207px;width:294px;height:261.2px;background:#262828;border-radius:3px"></div>
<svg style="left:804px;top:197px" width="20" height="11" viewBox="0 0 20 11"><path d="M0.4 10.5L9.9 0.9 19.2 10.5z" fill="#262828"/></svg>
<div class="r" style="left:793px;top:247px;width:298px;height:43.6px;background:#5f6f77;border:4px solid #e8582a"></div>
<svg style="left:805px;top:223px" width="16" height="15" viewBox="0 0 16 15"><circle cx="7.5" cy="7.5" r="7.2" fill="#5d6c74"/><path d="M7.5 3.6V11.4M3.6 7.5H11.4" stroke="#262828" stroke-width="1.8"/></svg>
<div class="t" style="left:828.2px;top:225.95px;font-size:10.3px;line-height:10.3px;color:#e2e3e3;font-weight:700;letter-spacing:2.1px;transform:scaleX(0.8098);">CREATE NEW OPPORTUNITIES</div>
<svg style="left:806px;top:261px" width="16" height="15" viewBox="0 0 16 15"><path d="M0 0H8.5L13 4.5V14H0z" fill="#f4f4f4"/><path d="M8.5 0V4.5H13z" fill="#5f6f77"/><path d="M9.4 0.6L12.4 3.6H9.4z" fill="#f4f4f4"/></svg>
<div class="t" style="left:828.2px;top:265.25px;font-size:10.3px;line-height:10.3px;color:#e2e3e3;font-weight:700;letter-spacing:2.1px;transform:scaleX(0.815);">SEND TEST</div>
<svg style="left:806px;top:297px" width="16" height="15" viewBox="0 0 16 15"><circle cx="7" cy="3.6" r="3.4" fill="#5d6c74"/><path d="M5 6.5H9V8.3C12 8.8 14 9.8 14 12V12.2H0V12C0 9.8 2 8.8 5 8.3z" fill="#5d6c74"/></svg>
<div class="t" style="left:828.2px;top:301.15px;font-size:10.3px;line-height:10.3px;color:#e2e3e3;font-weight:700;letter-spacing:2.1px;transform:scaleX(0.8249);">CHANGE OWNER</div>
<svg style="left:805px;top:331.5px" width="16" height="15" viewBox="0 0 16 15"><path d="M7.2 0C11.3 0 14.5 3.1 14.5 7V13.5H7.2C3.2 13.5 0 10.4 0 6.7 0 3 3.2 0 7.2 0z" fill="#5d6c74"/><circle cx="7.4" cy="6.8" r="3.4" fill="#262828"/></svg>
<div class="t" style="left:828.2px;top:336.15px;font-size:10.3px;line-height:10.3px;color:#e2e3e3;font-weight:700;letter-spacing:2.1px;transform:scaleX(0.8361);">CHANGE ORIGIN</div>
<svg style="left:805px;top:368px" width="16" height="15" viewBox="0 0 16 15"><path d="M5 0.4h5v1.8h4a1 1 0 0 1 1 1V12a1 1 0 0 1-1 1H1a1 1 0 0 1-1-1V3.2a1 1 0 0 1 1-1h4z M6 1.3v.9h3v-.9z" fill="#5d6c74"/><path d="M2.6 2.2V13M12.4 2.2V13" stroke="#262828" stroke-width="0.8"/></svg>
<div class="t" style="left:828.2px;top:372.15px;font-size:10.3px;line-height:10.3px;color:#e2e3e3;font-weight:700;letter-spacing:2.1px;transform:scaleX(0.8188);">ADD POSTING TO GENERAL OPPORTUNITIES</div>
<svg style="left:805px;top:403px" width="16" height="15" viewBox="0 0 16 15"><path d="M0 0H12.5V2.2L6.25 6.2 0 2.2z M0 3.8L6.25 7.8 12.5 3.8V9.6H0z" fill="#5d6c74"/><path d="M13.6 3.2H15V12.6H2.2V11.2H13.6z" fill="#5d6c74"/></svg>
<div class="t" style="left:828.2px;top:407.35px;font-size:10.3px;line-height:10.3px;color:#e2e3e3;font-weight:700;letter-spacing:2.1px;transform:scaleX(0.8114);">CANCEL CAMPAIGNS</div>
<svg style="left:806px;top:438px" width="16" height="15" viewBox="0 0 16 15"><path d="M4.5 0H8.5V1.2H12.5V3H0.5V1.2H4.5z M1.5 4H11.5V13a1 1 0 0 1-1 1H2.5a1 1 0 0 1-1-1z" fill="#5d6c74"/><path d="M4.2 5.6V12.4M6.5 5.6V12.4M8.8 5.6V12.4" stroke="#262828" stroke-width="0.9"/></svg>
<div class="t" style="left:828.2px;top:443.45px;font-size:10.3px;line-height:10.3px;color:#e2e3e3;font-weight:700;letter-spacing:2.1px;transform:scaleX(0.8119);">DELETE OPPORTUNITIES</div>
</body></html>
